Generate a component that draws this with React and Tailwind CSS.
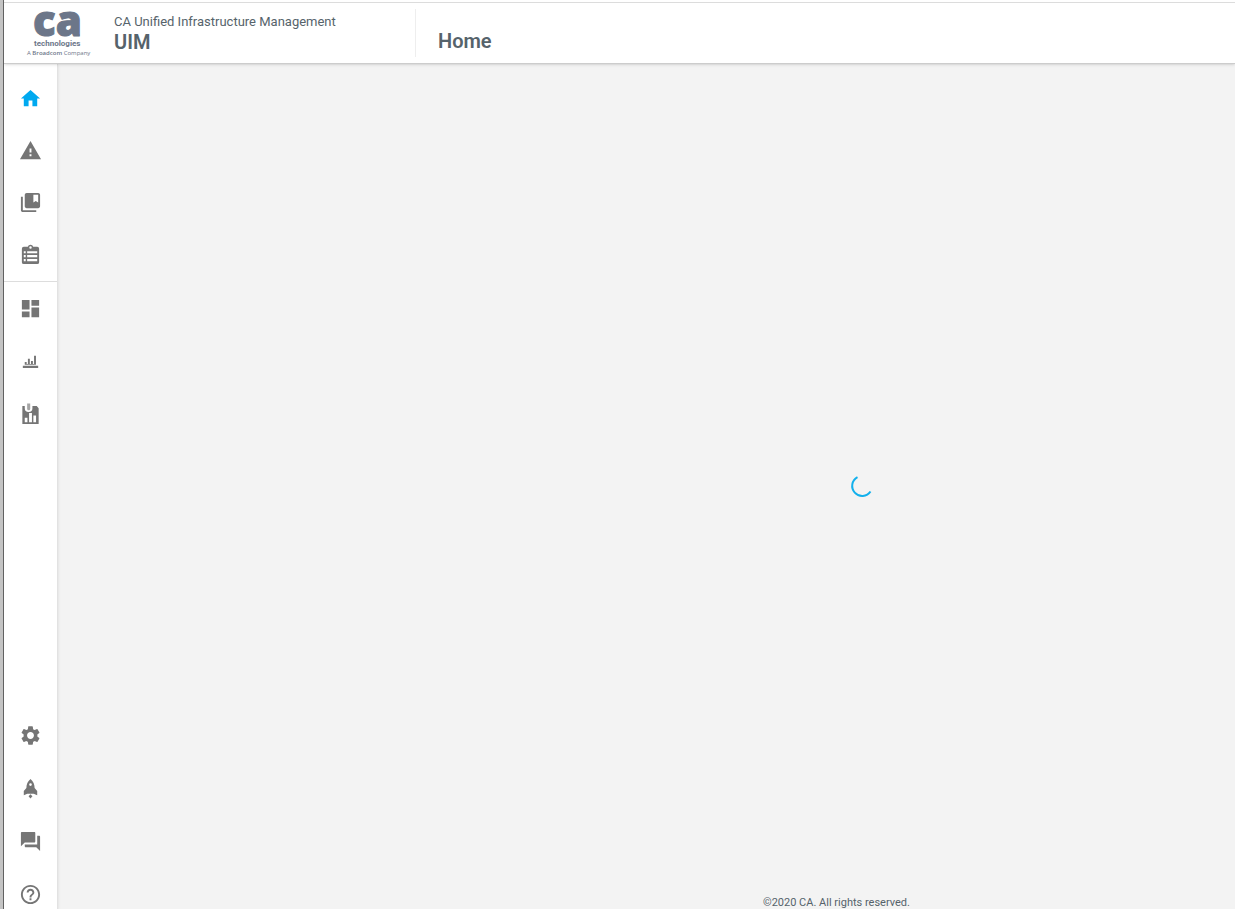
import {
  MdHome,
  MdWarning,
  MdCollectionsBookmark,
  MdDashboard,
  MdSettings,
  MdQuestionAnswer,
  MdHelpOutline,
} from 'react-icons/md';

function ClipboardIcon({ size = 24 }) {
  return (
    <svg width={size} height={size} viewBox="0 0 24 24" fill="currentColor">
      <path
        fillRule="evenodd"
        d="M5 4h4.2a2.9 2.9 0 0 1 5.6 0H19a2 2 0 0 1 2 2v14a2 2 0 0 1-2 2H5a2 2 0 0 1-2-2V6a2 2 0 0 1 2-2zm7-.5a1.300 1.300 0 1 0 0 2.600a1.300 1.300 0 0 0 0-2.600zM5 8.500v2.300h2V8.500zm3.500 0v2.300H19V8.500zM5 12.600v2.300h2v-2.300zm3.500 0v2.300H19v-2.300zM5 16.700V19h2v-2.300zm3.500 0V19H19v-2.300z"
      />
    </svg>
  );
}

function MetricsIcon({ size = 24 }) {
  return (
    <svg width={size} height={size} viewBox="0 0 24 24" fill="currentColor">
      <path d="M4 16.500h16v2.300H4zM6 12.500h2v3H6zM9.300 9h2v6.500h-2zM12.500 11.500h2v4h-2zM15.700 6h2v9.500h-2zM6 14.600h11.700v.9H6z" />
    </svg>
  );
}

function ReportIcon({ size = 24 }) {
  return (
    <svg width={size} height={size} viewBox="0 0 24 24" fill="currentColor">
      <path
        fillRule="evenodd"
        d="M3.500 3H6v2.500a4 4 0 0 0 8 0V3h4.500l2 2.500V22h-17zM6 15.500V20h2.800v-4.500zm4.500-5V20h3v-9.500zM15 13v7h2.800v-7z"
      />
      <path d="M8.500 0.500h3.200V6a1.600 1.600 0 0 1-3.200 0z" opacity="0.65" />
    </svg>
  );
}

function RocketIcon({ size = 24 }) {
  return (
    <svg width={size} height={size} viewBox="0 0 24 24" fill="currentColor">
      <path
        fillRule="evenodd"
        d="M12 2c3 2.500 4.300 5.500 4.300 9.500l2.700 3V19l-3.700-1.500H8.700L5 19v-4.500l2.700-3C7.700 7.500 9 4.500 12 2zm0 4.500a1.400 1.400 0 1 0 0 2.800a1.400 1.400 0 0 0 0-2.800z"
      />
      <path d="M12 18l2 2-2 2.500L10 20z" />
    </svg>
  );
}

const MAIN_NAV = [
  { key: 'home', label: 'Home', icon: MdHome },
  { key: 'alarms', label: 'Alarms', icon: MdWarning },
  { key: 'groups', label: 'Groups', icon: MdCollectionsBookmark },
  { key: 'inventory', label: 'Inventory', icon: ClipboardIcon },
];

const VIEW_NAV = [
  { key: 'dashboards', label: 'Dashboards', icon: MdDashboard },
  { key: 'metrics', label: 'Metrics', icon: MetricsIcon },
  { key: 'reports', label: 'Reports', icon: ReportIcon },
];

const FOOTER_NAV = [
  { key: 'settings', label: 'Settings', icon: MdSettings },
  { key: 'launch', label: 'Launch', icon: RocketIcon },
  { key: 'feedback', label: 'Feedback', icon: MdQuestionAnswer },
  { key: 'help', label: 'Help', icon: MdHelpOutline },
];

function NavItem({ item, active }) {
  return (
    <button
      type="button"
      aria-label={item.label}
      aria-current={active ? 'page' : undefined}
      className={active ? 'text-[#00a9f0]' : 'text-[#757575]'}
    >
      <item.icon size={23} />
    </button>
  );
}

function Logo() {
  return (
    <svg
      width="66"
      height="50"
      viewBox="0 0 66 50"
      role="img"
      aria-label="CA Technologies"
      fill="#6c7689"
      className="overflow-visible font-['Open_Sans',sans-serif]"
    >
      <text x="8" y="29" fontSize="42" fontWeight="800" stroke="#6c7689" strokeWidth="1">
        ca
      </text>
      <circle cx="54" cy="28" r="1" opacity="0.5" />
      <text x="9" y="39" fontSize="8" fontWeight="700" className="font-['Roboto',sans-serif]">
        technologies
      </text>
      <text x="2" y="48" fontSize="6">
        A <tspan fontWeight="600">Broadcom</tspan> Company
      </text>
    </svg>
  );
}

export default function App() {
  return (
    <div className="flex h-screen flex-col overflow-hidden border-l-3 border-[#c4c4c4] bg-[#f3f3f3] font-['Roboto',sans-serif]">
      <div className="flex min-h-0 flex-1 flex-col border-l border-[#666666]">
        {/* Header */}
        <header className="z-10 flex h-16 shrink-0 border-b border-[#cccccc] bg-white pt-0.5 shadow-sm">
          <div className="flex w-full border-t border-[#dcdcdc]">
            <div className="w-[110px] pt-1 pl-[21px]">
              <Logo />
            </div>
            <div className="my-1.5 w-[302px] border-r border-[#eeeeee] pt-[3px] text-[#56636b]">
              <p className="text-[13px] leading-5">CA Unified Infrastructure Management</p>
              <p className="text-xl leading-5 font-semibold">UIM</p>
            </div>
            <h1 className="pt-6 pl-[22px] text-xl leading-7 font-semibold text-[#56636b]">Home</h1>
          </div>
        </header>

        <div className="flex min-h-0 flex-1">
          {/* Sidebar */}
          <nav className="flex w-[54px] shrink-0 flex-col justify-between border-r border-[#e2e2e2] bg-white shadow-sm">
            <div>
              <div className="flex flex-col items-center gap-[29px] border-b border-[#dddddd] pt-[23px] pb-[15px]">
                {MAIN_NAV.map((item) => (
                  <NavItem key={item.key} item={item} active={item.key === 'home'} />
                ))}
              </div>
              <div className="flex flex-col items-center gap-[30px] pt-[15px]">
                {VIEW_NAV.map((item) => (
                  <NavItem key={item.key} item={item} />
                ))}
              </div>
            </div>
            <div className="flex flex-col items-center gap-[30px] pb-[3px]">
              {FOOTER_NAV.map((item) => (
                <NavItem key={item.key} item={item} />
              ))}
            </div>
          </nav>

          {/* Content */}
          <main className="flex flex-1 flex-col items-center">
            <div className="flex flex-1 items-center pt-3 pl-[428px]" role="status" aria-label="Loading">
              <svg width="24" height="24" viewBox="0 0 24 24" fill="none" stroke="#12b0ec" strokeWidth="2">
                <path d="M8.500 2.100A10 10 0 1 0 21.500 16.500" />
              </svg>
            </div>
            <footer className="pl-[380px] text-[11px] leading-3 text-[#56636b]">
              ©2020 CA. All rights reserved.
            </footer>
          </main>
        </div>
      </div>
    </div>
  );
}
